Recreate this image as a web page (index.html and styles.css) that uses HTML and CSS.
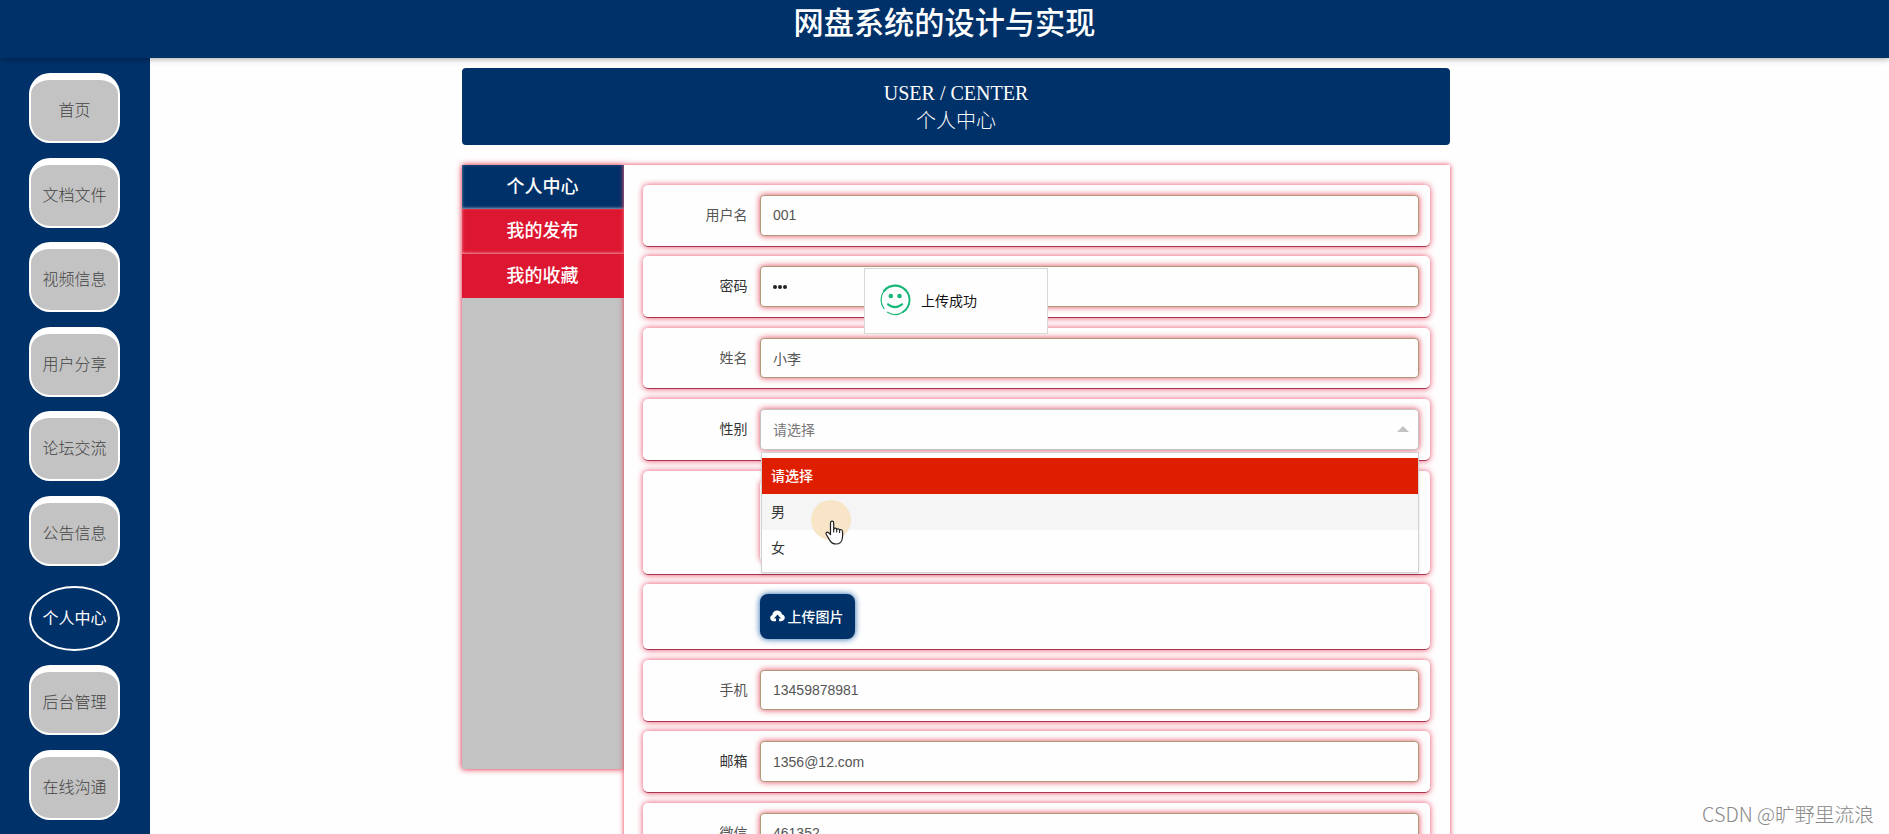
FILE: index.html
```html
<!DOCTYPE html>
<html lang="zh-CN">
<head>
    <meta charset="UTF-8">
    <meta name="viewport" content="width=device-width, initial-scale=1.0">
    <title>个人中心</title>
    <link rel="stylesheet" href="styles.css">
</head>
<body>
    <header class="header">
        <h1>网盘系统的设计与实现</h1>
    </header>

    <div class="layout">
        <nav class="sidebar">
            <a class="nav-item">首页</a>
            <a class="nav-item">文档文件</a>
            <a class="nav-item">视频信息</a>
            <a class="nav-item">用户分享</a>
            <a class="nav-item">论坛交流</a>
            <a class="nav-item">公告信息</a>
            <a class="nav-item active">个人中心</a>
            <a class="nav-item">后台管理</a>
            <a class="nav-item">在线沟通</a>
        </nav>

        <main class="content">
            <div class="banner">
                <p>USER / CENTER</p>
                <p class="banner-cn">个人中心</p>
            </div>

            <div class="center">
                <ul class="menu">
                    <li class="active">个人中心</li>
                    <li>我的发布</li>
                    <li>我的收藏</li>
                </ul>

                <form class="form">
                    <div class="form-item">
                        <label>用户名</label>
                        <div class="input">001</div>
                    </div>
                    <div class="form-item">
                        <label class="dark">密码</label>
                        <div class="input password"><i></i><i></i><i></i></div>
                    </div>
                    <div class="form-item">
                        <label>姓名</label>
                        <div class="input">小李</div>
                    </div>
                    <div class="form-item">
                        <label class="dark">性别</label>
                        <div class="input select">
                            <span>请选择</span>
                            <span class="arrow"></span>
                            <ul class="dropdown">
                                <li class="selected">请选择</li>
                                <li class="hover">男</li>
                                <li>女</li>
                            </ul>
                        </div>
                    </div>
                    <div class="form-item form-item-photo">
                        <label></label>
                        <div class="photo"></div>
                    </div>
                    <div class="form-item form-item-upload">
                        <label></label>
                        <button type="button" class="upload">
                            <svg width="15" height="12" viewBox="0 0 15 12">
                                <path d="M3.6 11.2C1.6 11.2.2 9.9.2 8 .2 6.500 1.100 5.400 2.400 5 2.500 2.400 4.600.6 7.200.6c2.300 0 4.200 1.400 4.700 3.600 1.700.3 2.900 1.600 2.900 3.400 0 2-1.500 3.600-3.500 3.600H9V8.400h2L7.500 4.500 4 8.400h2v2.800z" fill="#fff"/>
                            </svg>
                            <span>上传图片</span>
                        </button>
                    </div>
                    <div class="form-item">
                        <label>手机</label>
                        <div class="input">13459878981</div>
                    </div>
                    <div class="form-item">
                        <label class="dark">邮箱</label>
                        <div class="input">1356@12.com</div>
                    </div>
                    <div class="form-item">
                        <label>微信</label>
                        <div class="input">461352</div>
                    </div>
                </form>
            </div>
        </main>
    </div>

    <div class="message">
        <svg width="32" height="32" viewBox="0 0 32 32" fill="none" stroke="#16b777" stroke-linecap="round">
            <path d="M5 24.500A14.400 14.400 0 0 1 5 7" stroke-width="1.200"/>
            <path d="M5 7A14.400 14.400 0 0 1 26.500 6" stroke-width="2.200"/>
            <path d="M26.500 6A14.400 14.400 0 0 1 24 28" stroke-width="1.900"/>
            <path d="M24 28A14.400 14.400 0 0 1 8.500 28.300" stroke-width="1.300"/>
            <path d="M9 20.300c3.800 3.700 10.200 3.700 14 0" stroke-width="2.200"/>
            <circle cx="11.800" cy="12" r="2.300" fill="#16b777" stroke="none"/>
            <circle cx="20.500" cy="12" r="2.300" fill="#16b777" stroke="none"/>
        </svg>
        <span>上传成功</span>
    </div>

    <div class="pointer">
        <svg width="20" height="26" viewBox="0 0 20 26">
            <path d="M5.500 14.500V3c0-2.400 3.200-2.400 3.200 0v6.300c.4-1.600 2.800-1.400 3 .3.500-1.300 2.700-1 2.900.7.600-1 2.700-.7 2.900 1 .2 2.300.2 5.200-.2 7.200-.5 3.200-2.700 5.500-6.300 5.500-3 0-4.800-1.200-6.200-3.600L1.200 14.200c-.8-1.700 1.300-2.700 2.500-1.400z" fill="#fff" stroke="#222" stroke-width="1.200" stroke-linejoin="round"/>
            <path d="M8.700 9v3.500M11.700 9.600v3M14.600 10.300v2.600" stroke="#222" stroke-width="1.100" fill="none"/>
        </svg>
    </div>

    <div class="watermark">CSDN @旷野里流浪</div>
</body>
</html>
```
FILE: styles.css
```css
* {
    margin: 0;
    padding: 0;
    box-sizing: border-box;
}

body {
    height: 100vh;
    overflow: hidden;
    position: relative;
    background: #fefefe;
    font-family: "Liberation Sans", "Noto Sans CJK SC", sans-serif;
    font-size: 14px;
    color: #555;
}

ul {
    list-style: none;
}

.header {
    position: relative;
    height: 58px;
    background: #003168;
    box-shadow: 0 1px 6px rgba(0, 0, 0, 0.35);
    text-align: center;
}

.header h1 {
    color: #fff;
    font-size: 30.2px;
    font-weight: 500;
    line-height: 48px;
}

.layout {
    display: flex;
    height: 776px;
}

/* 左侧导航 */
.sidebar {
    width: 150px;
    padding: 15px 30px 0 29px;
    background: #003168;
}

.nav-item {
    display: flex;
    align-items: center;
    justify-content: center;
    height: 70px;
    margin-bottom: 14.6px;
    padding-bottom: 3px;
    border: 2px solid #fff;
    border-top-width: 7.5px;
    border-radius: 21px;
    background: #c3c3c3;
    color: #444;
    font-size: 16px;
    font-weight: 300;
    white-space: nowrap;
}

.nav-item.active {
    height: 65px;
    margin-top: 19.6px;
    padding-bottom: 2px;
    border-top-width: 2px;
    border-radius: 50%;
    background: transparent;
    color: #fff;
    font-weight: 400;
}

.content {
    width: 988px;
    height: 776px;
    margin-left: 312px;
    padding-top: 10px;
}

.banner {
    height: 77px;
    padding-top: 11px;
    border-radius: 4px;
    background: #003168;
    color: #fff;
    font-family: "Liberation Serif", "Noto Sans CJK SC", serif;
    font-size: 20px;
    line-height: 28px;
    text-align: center;
}

.banner-cn {
    font-weight: 300;
}

.center {
    display: flex;
    align-items: flex-start;
    margin-top: 20px;
}

.menu {
    width: 162px;
    height: 604px;
    background: #c3c3c3;
    box-shadow: 0 0 6px #dc1432;
}

.menu li {
    height: 44.300px;
    padding-right: 1px;
    background: #dd1731;
    box-shadow: inset 0 -1px 3px rgba(255, 255, 255, 0.55);
    color: #fff;
    font-size: 18px;
    font-weight: 500;
    line-height: 44px;
    text-align: center;
}

.menu li:last-child {
    box-shadow: none;
}

.menu .active {
    background: #003168;
}

/* 表单 */
.form {
    position: relative;
    flex: 1;
    height: 720px;
    padding: 20px 20px 0 19px;
    background: #fefefe;
    box-shadow: 0 0 5px #e8324e;
}

.form-item {
    display: flex;
    height: 61.700px;
    margin-bottom: 9.700px;
    padding: 10px 11px 0 0;
    border-bottom: 1px solid #a83450;
    border-radius: 5px;
    background: #fefefe;
    box-shadow: 0 0 6px #ea4c66;
}

.form-item label {
    width: 117px;
    padding-right: 12.500px;
    line-height: 41px;
    text-align: right;
}

.form-item .dark {
    color: #333;
}

.input {
    position: relative;
    display: flex;
    align-items: center;
    flex: 1;
    height: 40.500px;
    padding-left: 12px;
    border: 1px solid #b09a78;
    border-radius: 4px;
    background: #fefefe;
    box-shadow: 0 0 6px #e2455a;
}

.password i {
    width: 4px;
    height: 4px;
    margin-right: 1px;
    border-radius: 50%;
    background: #222;
}

.select {
    border-color: #c4c4c4;
    color: #777;
}

.arrow {
    margin-left: auto;
    margin-right: 9px;
    border: 6px solid transparent;
    border-top: 0;
    border-bottom-color: #c2c2c2;
}

.dropdown {
    position: absolute;
    z-index: 2;
    top: 42px;
    left: 0;
    right: -1px;
    padding: 5px 0 6px;
    border: 1px solid #d2d2d2;
    background: #fefefe;
    box-shadow: 0 2px 3px rgba(0, 0, 0, 0.1);
}

.dropdown li {
    height: 36px;
    padding-left: 9px;
    color: #333;
    line-height: 36px;
}

.dropdown .selected {
    background: #df1e00;
    color: #fff;
    font-weight: 500;
}

.dropdown .hover {
    background: #f5f5f5;
}

.form-item-photo {
    height: 104px;
}

.photo {
    width: 80px;
    height: 80px;
    border-radius: 4px;
    background: #fefefe;
    box-shadow: 0 0 6px #e85a6c;
}

.form-item-upload {
    height: 66px;
}

.upload {
    display: flex;
    align-items: center;
    gap: 3px;
    width: 94.500px;
    height: 45px;
    padding: 0 0 1px 9.500px;
    border: 0;
    border-radius: 8px;
    background: #003168;
    box-shadow: 0 0 6px #1f63a8;
    color: #fff;
    font: inherit;
    font-weight: 500;
    white-space: nowrap;
}

/* 提示框 */
.message {
    position: absolute;
    top: 268px;
    left: 864px;
    display: flex;
    align-items: center;
    gap: 10px;
    width: 184px;
    height: 66px;
    padding: 0 0 2px 14px;
    border: 1px solid #d8d8d8;
    background: #fefefe;
    color: #111;
    z-index: 5;
}

.pointer {
    position: absolute;
    top: 500px;
    left: 811px;
    width: 40px;
    height: 40px;
    padding: 20px 0 0 14px;
    border-radius: 50%;
    background: #f8e5c8;
    z-index: 5;
}

.pointer svg {
    display: block;
}

.watermark {
    position: absolute;
    right: 15px;
    bottom: 6px;
    color: #888;
    font-family: "Noto Sans CJK SC", sans-serif;
    font-size: 19.800px;
    font-weight: 300;
    line-height: 28px;
    white-space: nowrap;
}
```
